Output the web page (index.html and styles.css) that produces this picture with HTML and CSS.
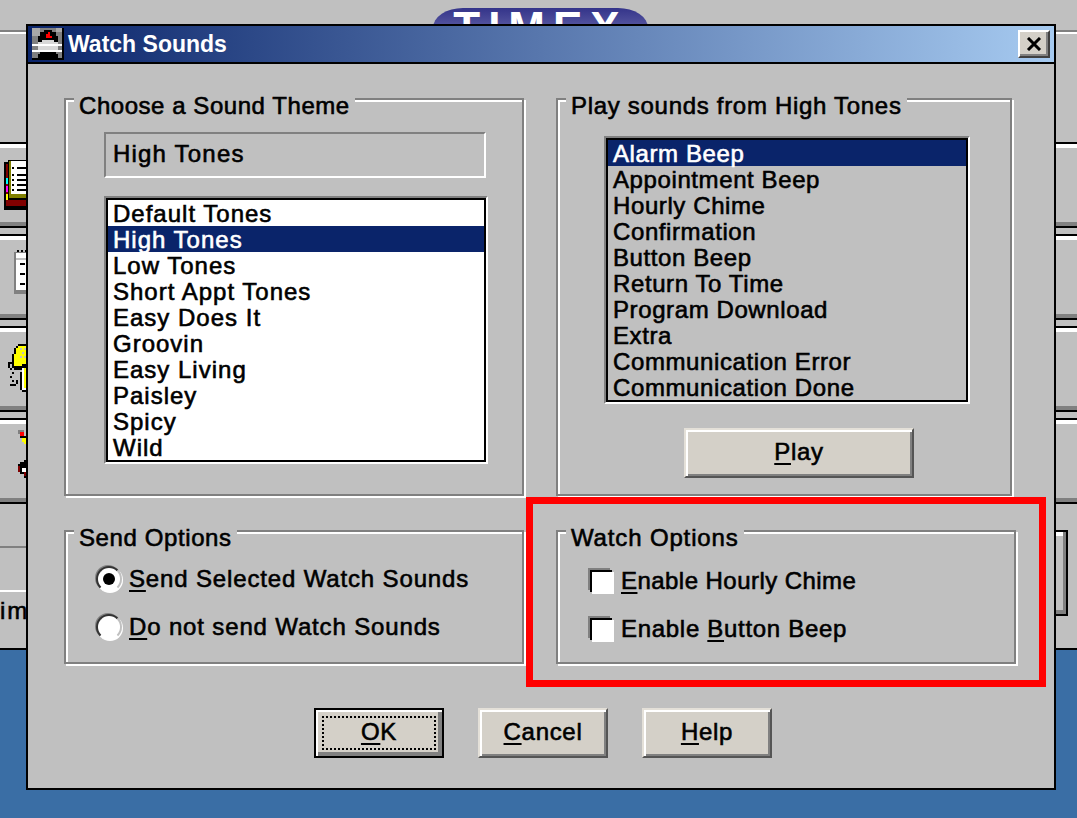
FILE: index.html
```html
<!DOCTYPE html>
<html lang="en">
<head>
    <meta charset="UTF-8">
    <meta name="viewport" content="width=device-width, initial-scale=1.0">
    <title>Watch Sounds</title>
    <link rel="stylesheet" href="styles.css">
</head>
<body>
    <!-- application window behind the dialog -->
    <div class="app">
        <div class="app-head">
            <div class="app-logo"><span>TIMEX</span></div>
        </div>
        <div class="app-top"></div>
        <div class="app-rows">
            <div class="app-row">
                <div class="app-row-inner">
                    <svg class="row-icon icon-book" width="26" height="50" viewBox="0 0 26 50" shape-rendering="crispEdges">
                        <rect x="0" y="2" width="26" height="48" fill="#000"/>
                        <rect x="2" y="4" width="24" height="42" fill="#800000"/>
                        <rect x="4" y="0" width="22" height="40" fill="#000"/>
                        <rect x="5" y="1" width="21" height="37" fill="#808000"/>
                        <rect x="7" y="1" width="19" height="33" fill="#fff"/>
                        <rect x="2" y="18" width="2" height="6" fill="#00ffff"/>
                        <rect x="2" y="26" width="2" height="6" fill="#ff00ff"/>
                        <rect x="2" y="34" width="2" height="6" fill="#ffff00"/>
                        <path d="M8 7h2v2H8zM13 7h13v2H13zM8 14h2v2H8zM13 14h13v2H13zM8 19h2v2H8zM13 19h13v2H13zM8 24h2v2H8zM13 24h13v2H13zM8 29h2v2H8zM13 29h13v2H13z" fill="#000"/>
                    </svg>
                </div>
            </div>
            <div class="app-row">
                <div class="app-row-inner">
                    <svg class="row-icon icon-note" width="14" height="44" viewBox="0 0 14 44" shape-rendering="crispEdges">
                        <rect x="0" y="2" width="14" height="42" fill="#808080"/>
                        <rect x="2" y="3" width="12" height="37" fill="#fff"/>
                        <path d="M3 0h2v2H3zM7 0h2v2H7zM11 0h2v2h-2z" fill="#000"/>
                        <rect x="2" y="8" width="12" height="2" fill="#c0c0c0"/>
                        <path d="M6 13h5v2H6zM6 23h5v2H6zM6 33h5v2H6z" fill="#000"/>
                    </svg>
                </div>
            </div>
            <div class="app-row">
                <div class="app-row-inner">
                    <svg class="row-icon icon-phone" width="22" height="50" viewBox="0 0 22 50" shape-rendering="crispEdges">
                        <path d="M8 6h2V4h2V2h10v24h-6v2h-8v-2H6V12h2z" fill="#000"/>
                        <path d="M10 8V6h2V4h10v18h-6v2H8V12h2z" fill="#ffff00"/>
                        <path d="M14 6h2v2h-2zM18 6h2v2h-2zM16 10h2v2h-2zM20 10h2v2h-2zM14 14h2v2h-2zM18 14h2v2h-2z" fill="#c0c0c0"/>
                        <path d="M2 20h4v2H4v4H2zM4 26h2v2H4zM6 30h2v2H6zM4 34h2v2H4zM6 38h2v2H6zM4 42h6v2H4zM10 38h2v4h-2z" fill="#000"/>
                        <path d="M16 24h6v26h-6v-2h-2V30h2z" fill="#000"/>
                        <path d="M16 26h6v22h-6z" fill="#fff"/>
                        <path d="M18 26h4v20h-4z" fill="#ffff00"/>
                    </svg>
                </div>
            </div>
            <div class="app-row">
                <div class="app-row-inner">
                    <svg class="row-icon icon-bird" width="10" height="50" viewBox="0 0 10 50" shape-rendering="crispEdges">
                        <rect x="0" y="0" width="6" height="4" fill="#808080"/>
                        <rect x="2" y="2" width="4" height="4" fill="#ff0000"/>
                        <path d="M2 6h6v4H4V8H2z" fill="#000"/>
                        <path d="M4 8h6v6H6v-2H4z" fill="#ffff00"/>
                        <rect x="8" y="14" width="2" height="6" fill="#000"/>
                        <path d="M6 30h4v18H6v-4H2v-6H0v-4h2v-2h4z" fill="#000"/>
                        <path d="M0 36h2v6H0zM6 42h4v4H6z" fill="#800000"/>
                        <path d="M4 38h6v4H4z" fill="#fff"/>
                    </svg>
                </div>
            </div>
        </div>
        <div class="app-status">
            <div class="status-left">
                <div class="status-box"></div>
                <div class="status-text">im</div>
            </div>
            <div class="status-btn"></div>
        </div>
    </div>

    <div class="dialog">
        <div class="titlebar">
            <svg class="title-icon" width="32" height="32" viewBox="0 0 32 32" shape-rendering="crispEdges">
                <rect width="32" height="32" fill="#000"/>
                <rect width="30" height="30" fill="#808080"/>
                <path d="M0 0h8v8H0zM24 0h6v4h-6z" fill="#a8a8a8"/>
                <path d="M12 2h8v2h4v4h2v6H6V8h2V4h4z" fill="#000"/>
                <path d="M14 6h2V4h2v4h2v2h-6z" fill="#ff0000"/>
                <path d="M10 12h12v2h4v8H6v-8h4z" fill="#d8d8d8"/>
                <rect y="16" width="30" height="2" fill="#fff"/>
                <rect y="22" width="30" height="2" fill="#fff"/>
                <path d="M8 24h16v2h2v4H6v-4h2z" fill="#000"/>
            </svg>
            <span class="title-text">Watch Sounds</span>
            <div class="close-btn">
                <svg width="16" height="14" viewBox="0 0 16 14"><path d="M2 1l12 12M14 1L2 13" stroke="#000" stroke-width="3" fill="none"/></svg>
            </div>
        </div>

        <div class="dialog-body">
            <div class="group-row group-row-top">
                <div class="group group-theme">
                    <div class="group-title title-theme">Choose a Sound Theme</div>
                    <div class="theme-name">High Tones</div>
                    <div class="listbox theme-list">
                        <div class="list-item">Default Tones</div>
                        <div class="list-item selected">High Tones</div>
                        <div class="list-item">Low Tones</div>
                        <div class="list-item">Short Appt Tones</div>
                        <div class="list-item">Easy Does It</div>
                        <div class="list-item">Groovin</div>
                        <div class="list-item">Easy Living</div>
                        <div class="list-item">Paisley</div>
                        <div class="list-item">Spicy</div>
                        <div class="list-item">Wild</div>
                    </div>
                </div>
                <div class="group group-play">
                    <div class="group-title title-play">Play sounds from High Tones</div>
                    <div class="listbox sound-list">
                        <div class="list-item selected">Alarm Beep</div>
                        <div class="list-item">Appointment Beep</div>
                        <div class="list-item">Hourly Chime</div>
                        <div class="list-item">Confirmation</div>
                        <div class="list-item">Button Beep</div>
                        <div class="list-item">Return To Time</div>
                        <div class="list-item">Program Download</div>
                        <div class="list-item">Extra</div>
                        <div class="list-item">Communication Error</div>
                        <div class="list-item">Communication Done</div>
                    </div>
                    <div class="btn btn-play"><span><u>P</u>lay</span></div>
                </div>
            </div>

            <div class="group-row group-row-bottom">
                <div class="group group-options">
                    <div class="group-title title-send">Send Options</div>
                    <div class="option option-radio"><span class="radio checked"></span><span class="option-label"><u>S</u>end Selected Watch Sounds</span></div>
                    <div class="option option-radio"><span class="radio"></span><span class="option-label"><u>D</u>o not send Watch Sounds</span></div>
                </div>
                <div class="group group-options">
                    <div class="group-title title-watch">Watch Options</div>
                    <div class="option option-check"><span class="checkbox"></span><span class="option-label label-chime"><u>E</u>nable Hourly Chime</span></div>
                    <div class="option option-check"><span class="checkbox"></span><span class="option-label label-beep">Enable <u>B</u>utton Beep</span></div>
                </div>
            </div>

            <div class="button-row">
                <div class="btn btn-default"><span class="focus-box"><span><u>O</u>K</span></span></div>
                <div class="btn"><span><u>C</u>ancel</span></div>
                <div class="btn"><span><u>H</u>elp</span></div>
            </div>
        </div>

        <div class="highlight"></div>
    </div>
</body>
</html>
```

FILE: styles.css
```css
html, body {
    margin: 0;
    padding: 0;
}
body {
    position: relative;
    width: 1077px;
    height: 818px;
    overflow: hidden;
    background-color: #3a6ea5;
    font-family: 'Liberation Sans', Arial, sans-serif;
    font-size: 24px;
    color: #000;
    -webkit-text-stroke: 0.6px currentColor;
}
u {
    text-decoration-thickness: 2px;
    text-underline-offset: 3px;
}

/* application behind the dialog */
.app {
    height: 648px;
    background-color: #c0c0c0;
    border-bottom: 2px solid #000;
}
.app-head {
    height: 30px;
    padding-left: 433px;
}
.app-logo {
    position: relative;
    top: 8px;
    width: 215px;
    height: 40px;
    overflow: hidden;
    text-align: center;
    border-radius: 30px 30px 0 0 / 20px 20px 0 0;
    background: linear-gradient(#34348a, #7c7cb8);
}
.app-logo span {
    color: #fff;
    font-size: 44px;
    font-weight: bold;
    line-height: 40px;
    letter-spacing: 8px;
    -webkit-text-stroke: 0;
}
.app-top {
    height: 112px;
    box-sizing: border-box;
    border-top: 2px solid #808080;
    box-shadow: inset 0 2px 0 #fff;
}
.app-rows {
    display: flex;
    flex-direction: column;
    gap: 6px;
}
.app-row {
    height: 82px;
    border-top: 2px solid #000;
    border-bottom: 2px solid #000;
}
.app-row-inner {
    height: 74px;
    border-top: 4px solid #fff;
    border-bottom: 4px solid #808080;
}
.row-icon {
    display: block;
}
.icon-book {
    margin: 12px 0 0 4px;
}
.icon-note {
    margin: 10px 0 0 14px;
}
.icon-phone {
    margin: 10px 0 0 6px;
}
.icon-bird {
    margin: 6px 0 0 18px;
}
.app-status {
    display: flex;
    justify-content: space-between;
    height: 142px;
}
.status-left {
    width: 100px;
}
.status-box {
    height: 42px;
    margin-top: 42px;
    border-top: 2px solid #808080;
    border-bottom: 2px solid #fff;
}
.status-text {
    line-height: 38px;
    letter-spacing: 2px;
}
.status-btn {
    width: 100px;
    height: 82px;
    margin: 26px 9px 0 0;
    border: 2px solid #000;
    border-left: none;
    box-shadow: inset -3px -4px 0 #808080, inset 0 4px 0 #fff;
}

/* dialog */
.dialog {
    position: absolute;
    left: 26px;
    top: 24px;
    box-sizing: border-box;
    width: 1030px;
    height: 766px;
    border: 2px solid #000;
    background-color: #c0c0c0;
}
.titlebar {
    display: flex;
    align-items: center;
    height: 36px;
    padding: 0 4px;
    border-bottom: 2px solid #000;
    background: linear-gradient(to right, #0a246a, #a6caf0);
}
.title-icon {
    flex: none;
}
.title-text {
    margin-left: 4px;
    color: #fff;
    font-weight: bold;
    font-size: 23px;
    letter-spacing: 0;
    -webkit-text-stroke: 0;
}
.close-btn {
    display: flex;
    align-items: center;
    justify-content: center;
    box-sizing: border-box;
    width: 32px;
    height: 28px;
    margin-left: auto;
    background-color: #d4d0c8;
    border: 2px solid;
    border-color: #fff #404040 #404040 #fff;
    box-shadow: inset -2px -2px 0 #808080;
}
.dialog-body {
    padding: 34px 0 0 36px;
}
.group-row {
    display: flex;
}
.group-row-top {
    gap: 32px;
}
.group-row-bottom {
    gap: 32px;
    margin-top: 34px;
}
.group {
    position: relative;
    box-sizing: border-box;
    border: 2px solid #808080;
    box-shadow: inset 2px 2px 0 #fff, 2px 2px 0 #fff;
}
.group-theme {
    width: 460px;
    height: 398px;
}
.group-play {
    width: 456px;
    height: 398px;
}
.group-options {
    width: 460px;
    height: 134px;
}
.group-title {
    position: absolute;
    left: 8px;
    top: -8px;
    padding: 0 5px;
    background-color: #c0c0c0;
    line-height: 28px;
}
.title-theme {
    letter-spacing: 0.55px;
}
.title-play {
    letter-spacing: 0.7px;
}
.title-send {
    letter-spacing: 0.6px;
}
.title-watch {
    letter-spacing: 0.85px;
}
.theme-name {
    box-sizing: border-box;
    width: 382px;
    height: 46px;
    margin: 32px 0 0 38px;
    padding-left: 7px;
    line-height: 40px;
    letter-spacing: 1.2px;
    border: 2px solid;
    border-color: #808080 #fff #fff #808080;
}
.listbox {
    box-sizing: border-box;
    height: 268px;
    border: 2px solid;
    border-color: #808080 #fff #fff #808080;
}
.list-item {
    height: 26px;
    line-height: 28px;
    padding-left: 5px;
    box-sizing: border-box;
}
.list-item.selected {
    color: #fff;
    background-color: #0a246a;
}
.theme-list {
    width: 384px;
    margin: 18px 0 0 38px;
    letter-spacing: 1px;
    background-color: #fff;
    box-shadow: inset 2px 2px 0 #000, inset -2px -2px 0 #000;
    padding: 2px;
}
.sound-list {
    width: 366px;
    margin: 36px 0 0 46px;
    letter-spacing: 0.6px;
    padding: 2px;
    box-shadow: inset 2px 2px 0 #000, inset -2px -2px 0 #000;
}
.btn {
    display: flex;
    align-items: center;
    justify-content: center;
    box-sizing: border-box;
    width: 130px;
    height: 50px;
    padding-bottom: 2px;
    background-color: #d4d0c8;
    border: 2px solid;
    border-color: #e4e0d8 #555 #555 #e4e0d8;
    box-shadow: inset 2px 2px 0 #fff, inset -2px -2px 0 #808080;
    letter-spacing: 0.7px;
    line-height: 26px;
}
.btn-play {
    width: 230px;
    margin: 24px 0 0 126px;
}
.btn-default {
    padding-bottom: 0;
    border-color: #000;
    box-shadow: inset 2px 2px 0 #fff, inset -4px -4px 0 #808080;
}
.focus-box {
    display: flex;
    align-items: center;
    justify-content: center;
    box-sizing: border-box;
    width: 114px;
    height: 34px;
    padding-bottom: 2px;
    outline: 2px dotted #000;
    outline-offset: -2px;
}
.option {
    display: flex;
    align-items: center;
    height: 26px;
    margin-top: 22px;
    letter-spacing: 0.85px;
}
.option-radio {
    padding-left: 30px;
}
.group-title + .option-radio {
    margin-top: 34px;
}
.option-check {
    padding-left: 32px;
}
.group-title + .option-check {
    margin-top: 36px;
}
.option-radio .option-label {
    margin-left: 7px;
}
.option-check .option-label {
    margin-left: 9px;
}
.label-chime {
    letter-spacing: 0.45px;
}
.label-beep {
    letter-spacing: 0.7px;
}
.radio {
    display: flex;
    align-items: center;
    justify-content: center;
    box-sizing: border-box;
    width: 26px;
    height: 26px;
    border-radius: 50%;
    background-color: #fff;
    border: 2px solid;
    border-color: #333 #c0c0c0 #fff #333;
    box-shadow: -1px -1px 0 #808080, 1px 1px 0 #fff;
}
.radio.checked::after {
    content: "";
    width: 12px;
    height: 12px;
    border-radius: 50%;
    background-color: #000;
}
.checkbox {
    box-sizing: border-box;
    width: 22px;
    height: 22px;
    background-color: #fff;
    border-top: 2px solid #000;
    border-left: 2px solid #000;
    box-shadow: -2px -2px 0 #808080, 2px 2px 0 #fff;
}
.button-row {
    display: flex;
    gap: 34px;
    margin: 44px 0 0 250px;
}
.highlight {
    position: absolute;
    left: 498px;
    top: 471px;
    box-sizing: border-box;
    width: 520px;
    height: 190px;
    border: 7px solid #ff0000;
}
```
